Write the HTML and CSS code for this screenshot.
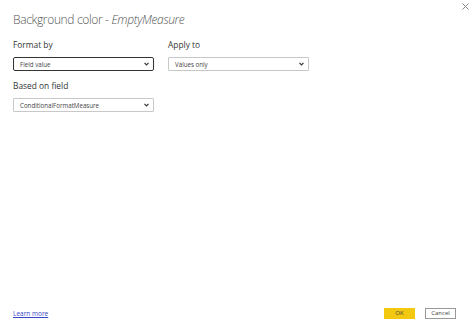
FILE: index.html
```html
<!DOCTYPE html>
<html>
<head>
<meta charset="utf-8">
<link rel="stylesheet" href="styles.css">
</head>
<body>
<div class="dialog">
  <div class="close" aria-label="Close">
    <svg width="7" height="7" viewBox="0 0 7 7"><path d="M0.5 0.5L6.5 6.5M6.5 0.5L0.5 6.5" stroke="#8a8a8a" stroke-width="1"/></svg>
  </div>
  <h1 class="title">Background color - <em>EmptyMeasure</em></h1>
  <div class="grid">
    <div class="field">
      <div class="label">Format by</div>
      <div class="select focused"><span>Field value</span><svg class="chev" width="5" height="4" viewBox="0 0 5 4"><path d="M0.5 0.8L2.5 2.8L4.5 0.8" fill="none" stroke="#333" stroke-width="1.2"/></svg></div>
    </div>
    <div class="field">
      <div class="label">Apply to</div>
      <div class="select"><span>Values only</span><svg class="chev" width="5" height="4" viewBox="0 0 5 4"><path d="M0.5 0.8L2.5 2.8L4.5 0.8" fill="none" stroke="#333" stroke-width="1.2"/></svg></div>
    </div>
    <div class="field">
      <div class="label">Based on field</div>
      <div class="select"><span>ConditionalFormatMeasure</span><svg class="chev" width="5" height="4" viewBox="0 0 5 4"><path d="M0.5 0.8L2.5 2.8L4.5 0.8" fill="none" stroke="#333" stroke-width="1.2"/></svg></div>
    </div>
  </div>
  <div class="spacer"></div>
  <div class="footer">
    <a class="learn" href="#">Learn more</a>
    <div class="buttons">
      <div class="btn ok">OK</div>
      <div class="btn cancel">Cancel</div>
    </div>
  </div>
</div>
</body>
</html>
```
FILE: styles.css
```css
html, body {
  margin: 0;
  padding: 0;
  background: #fff;
}
body {
  width: 474px;
  height: 332px;
  font-family: "Open Sans", "Noto Sans", sans-serif;
  color: #333;
}
.dialog {
  position: relative;
  box-sizing: border-box;
  width: 474px;
  height: 332px;
  padding: 11px 13px 13px 13px;
  display: flex;
  flex-direction: column;
}
.close {
  position: absolute;
  top: 3px;
  right: 5px;
  width: 7px;
  height: 7px;
  line-height: 0;
}
.title {
  margin: 0;
  font-weight: 300;
  font-size: 12px;
  line-height: 18px;
  color: #555;
  letter-spacing: -0.35px;
}
.title em {
  font-style: italic;
}
.grid {
  margin-top: 10px;
  display: grid;
  grid-template-columns: 141px 141px;
  column-gap: 14px;
  row-gap: 9px;
}
.label {
  font-size: 8.4px;
  line-height: 12px;
  color: #333;
  margin-bottom: 6px;
}
.select {
  box-sizing: border-box;
  height: 14px;
  border: 1px solid #c8c8c8;
  border-radius: 1px;
  display: flex;
  align-items: center;
  justify-content: space-between;
  padding: 0 4px 0 6px;
  font-size: 6.2px;
  color: #444;
}
.select.focused {
  border-color: #333;
  border-radius: 2px;
}
.chev {
  display: block;
}
.spacer {
  flex: 1;
}
.footer {
  display: flex;
  justify-content: space-between;
  align-items: center;
}
.learn {
  font-size: 6.5px;
  color: #3a47c8;
  text-decoration: underline;
}
.buttons {
  display: flex;
  gap: 10px;
  margin-right: 5px;
}
.btn {
  box-sizing: border-box;
  width: 31px;
  height: 11px;
  font-size: 6px;
  line-height: 9px;
  text-align: center;
  color: #444;
  border: 1px solid transparent;
}
.ok {
  background: #f2c811;
  border-color: #f2c811;
}
.cancel {
  background: #fff;
  border-color: #999;
}
```
